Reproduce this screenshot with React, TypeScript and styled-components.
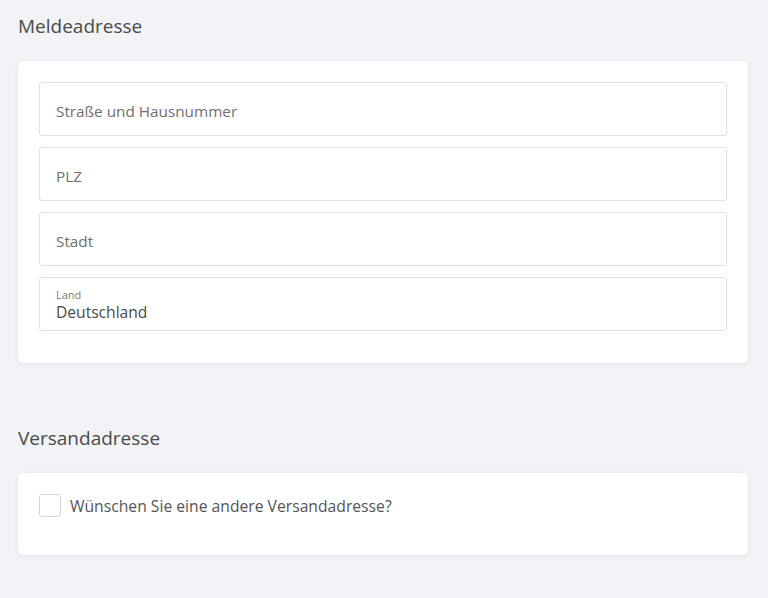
import React from "react";
import styled, { createGlobalStyle } from "styled-components";

const Global = createGlobalStyle`
  html, body { margin: 0; padding: 0; background: #f2f3f7; }
  body { font-family: "Open Sans", "Noto Sans", sans-serif; color: #4a4a4a; }
  * { box-sizing: border-box; }
`;

const Page = styled.div`
  padding: 14px 20px 40px 18px;
  min-height: 598px;
`;

const Heading = styled.h2<{ $top?: number }>`
  margin: ${(p) => p.$top ?? 0}px 0 23px 0;
  font-size: 19px;
  line-height: 24px;
  font-weight: 500;
  color: #4a4a4a;
`;

const Card = styled.div<{ $pb: number }>`
  background: #fff;
  border-radius: 5px;
  box-shadow: 0 1px 4px rgba(30, 40, 70, 0.08);
  padding: 21px 21px ${(p) => p.$pb}px 21px;
  display: flex;
  flex-direction: column;
  gap: 11px;
`;

const Field = styled.div`
  height: 54px;
  border: 1px solid #dde1e6;
  border-radius: 3px;
  padding: 0 16px;
  display: flex;
  flex-direction: column;
  justify-content: center;
`;

const Placeholder = styled.span`
  font-size: 15.3px;
  line-height: 21px;
  color: #6f6f6f;
  padding-top: 4px;
`;

const SmallLabel = styled.span`
  font-size: 11px;
  line-height: 15px;
  color: #7a7a7a;
  margin-top: 1px;
`;

const Value = styled.span`
  font-size: 15.6px;
  line-height: 21px;
  color: #4a4a4a;
`;

const CheckRow = styled.label`
  display: flex;
  align-items: center;
  gap: 9px;
  font-size: 15.7px;
  color: #555;
  height: 23px;
`;

const Box = styled.span`
  width: 22px;
  height: 23px;
  flex: none;
  border: 1px solid #d2d5da;
  border-radius: 3px;
  background: #fff;
  display: inline-block;
`;

export default function App() {
  return (
    <>
      <Global />
      <Page>
        <Heading>Meldeadresse</Heading>
        <Card $pb={32}>
          <Field><Placeholder>Straße und Hausnummer</Placeholder></Field>
          <Field><Placeholder>PLZ</Placeholder></Field>
          <Field><Placeholder>Stadt</Placeholder></Field>
          <Field>
            <SmallLabel>Land</SmallLabel>
            <Value>Deutschland</Value>
          </Field>
        </Card>
        <Heading $top={63}>Versandadresse</Heading>
        <Card $pb={38}>
          <CheckRow>
            <Box />
            Wünschen Sie eine andere Versandadresse?
          </CheckRow>
        </Card>
      </Page>
    </>
  );
}
